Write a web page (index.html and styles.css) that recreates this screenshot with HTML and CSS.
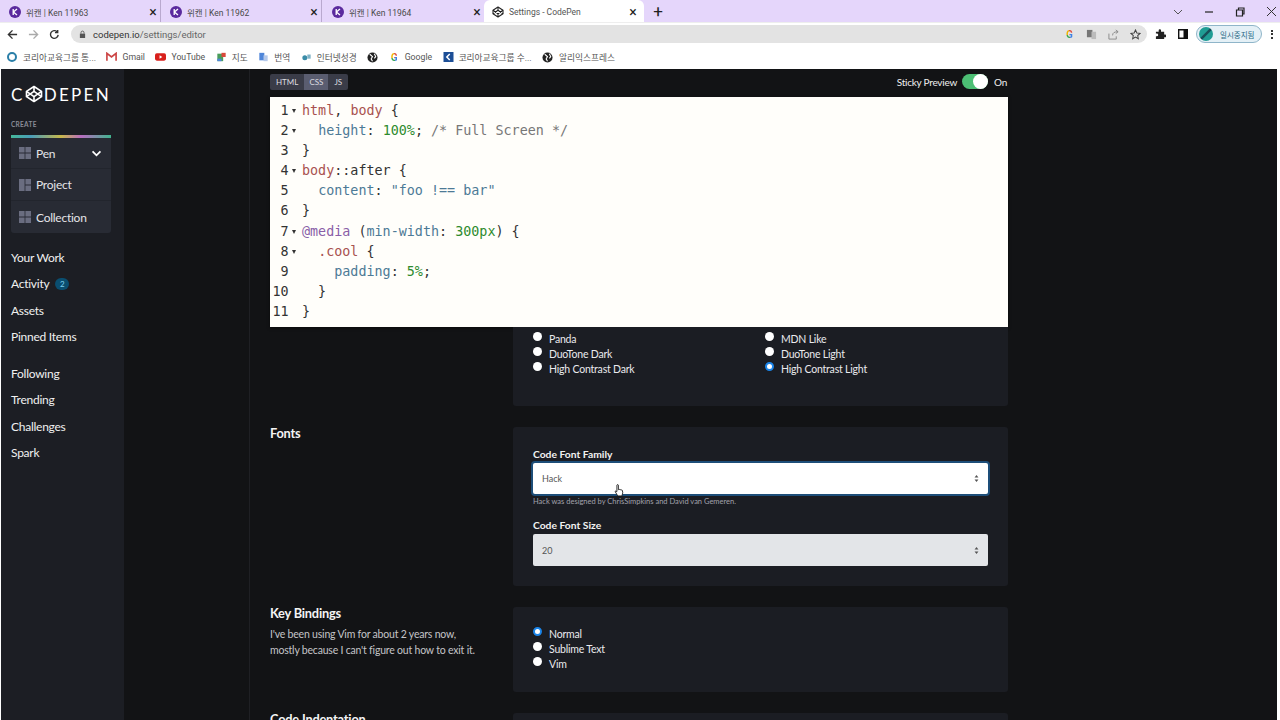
FILE: index.html
```html
<!DOCTYPE html>
<html lang="ko">
<head>
<meta charset="utf-8">
<title>Settings - CodePen</title>
<link rel="stylesheet" href="styles.css">
</head>
<body>
<svg class="defs" width="0" height="0" aria-hidden="true">
  <defs>
    <symbol id="k" viewBox="0 0 12 12"><circle cx="6" cy="6" r="6" fill="#5b2a9e"/><path d="M4.200 3v6M8 3 4.400 6 8 9" fill="none" stroke="#fff" stroke-width="1.300"/></symbol>
    <symbol id="cube" viewBox="0 0 24 24"><g fill="none" stroke="currentColor" stroke-width="2.200" stroke-linejoin="round"><path d="M12 2 22 8.500v7L12 22 2 15.500v-7Z"/><path d="M12 2v6.500M12 15.500V22M2 8.500l10 7 10-7M2 15.500l10-7 10 7"/></g></symbol>
    <symbol id="globe" viewBox="0 0 12 12"><circle cx="6" cy="6" r="5.500" fill="#222"/><path d="M3 2.500 6 5 4.500 7.500 6 10M8 2 9.500 5 8 7" fill="none" stroke="#fff" stroke-width="1.200"/></symbol>
    <symbol id="grid4" viewBox="0 0 14 14"><path d="M0 0h6.500v6.500H0zM7.500 0H14v6.500H7.500zM0 7.500h6.500V14H0zM7.500 7.500H14V14H7.500z" fill="#6a6d80"/></symbol>
    <symbol id="gridp" viewBox="0 0 14 14"><path d="M0 0h6.500v14H0zM7.500 0H14v6.500H7.500zM7.500 7.500H14V14H7.500z" fill="#6a6d80"/></symbol>
    <symbol id="updown" viewBox="0 0 6 9"><path d="M3 0 5.500 3.300H.5ZM3 9 .5 5.700h5Z" fill="#555"/></symbol>
  </defs>
</svg>

<div class="chrome">
  <div class="tabs">
    <div class="tab"><svg class="fav"><use href="#k"/></svg><span class="tab-t">위캔 | Ken 11963</span><span class="x">×</span></div>
    <div class="tab"><svg class="fav"><use href="#k"/></svg><span class="tab-t">위캔 | Ken 11962</span><span class="x">×</span></div>
    <div class="tab"><svg class="fav"><use href="#k"/></svg><span class="tab-t">위캔 | Ken 11964</span><span class="x">×</span></div>
    <div class="tab tab-on"><svg class="fav cp-fav"><use href="#cube"/></svg><span class="tab-t">Settings - CodePen</span><span class="x">×</span></div>
    <span class="plus">+</span>
    <div class="win">
      <svg width="10" height="6" viewBox="0 0 10 6"><path d="M1 1l4 4 4-4" fill="none" stroke="#555" stroke-width="1"/></svg>
      <svg width="10" height="2" viewBox="0 0 10 2"><path d="M1 1h8" stroke="#222" stroke-width="1.200"/></svg>
      <svg width="10" height="10" viewBox="0 0 10 10"><path d="M1.500 3h6v6h-6zM3.500 3V1h5.500v6H7.500" fill="none" stroke="#222" stroke-width="1.200"/></svg>
      <svg width="11" height="11" viewBox="0 0 11 11"><path d="M1 1l9 9M10 1l-9 9" stroke="#333" stroke-width="1"/></svg>
    </div>
  </div>
  <div class="toolbar">
    <svg class="nav" viewBox="0 0 12 12"><path d="M11 6H2M6 1.500 1.500 6 6 10.500" fill="none" stroke="#333" stroke-width="1.500"/></svg>
    <svg class="nav" viewBox="0 0 12 12"><path d="M1 6h9M6 1.500 10.500 6 6 10.500" fill="none" stroke="#aaa" stroke-width="1.500"/></svg>
    <svg class="nav" viewBox="0 0 12 12"><path d="M10 6.500A4.200 4.200 0 1 1 8.800 3M9.500 1v3h-3" fill="none" stroke="#333" stroke-width="1.500"/></svg>
    <div class="omni">
      <svg class="lock" viewBox="0 0 8 10"><path d="M1 4h6v5H1z" fill="#555"/><path d="M2.300 4V2.800a1.700 1.700 0 0 1 3.400 0V4" fill="none" stroke="#555"/></svg>
      <span class="url">codepen.io<span class="url-dim">/settings/editor</span></span>
      <span class="omni-end">
        <span class="g">G</span>
        <svg class="oi" viewBox="0 0 12 12"><path d="M1 1h6v8H1z" fill="#777"/><path d="M6 3h5v8H6z" fill="#bbb"/></svg>
        <svg class="oi" viewBox="0 0 12 12"><path d="M1 5v6h8V8M5 7c0-3 2-4 6-4M8.500 1 11 3 8.500 5" fill="none" stroke="#888"/></svg>
        <svg class="oi" viewBox="0 0 12 12"><path d="M6 1l1.500 3.300 3.500.4-2.600 2.400.7 3.500L6 8.800l-3.100 1.800.7-3.500L1 4.700l3.500-.4Z" fill="none" stroke="#444" stroke-width="1.100"/></svg>
      </span>
    </div>
    <svg class="puzzle" viewBox="0 0 12 12"><path d="M1 3h3V1.500a1.300 1.300 0 0 1 2.600 0V3H10v3h1a1.500 1.500 0 0 1 0 3h-1v2H1V8h1a1.500 1.500 0 0 0 0-3H1Z" fill="#222"/></svg>
    <svg class="panel" viewBox="0 0 10 10"><path d="M.7.700h8.600v8.600H.7z" fill="#fff" stroke="#111" stroke-width="1.400"/><path d="M5.500 1h4v8h-4z" fill="#111"/></svg>
    <div class="profile"><span class="avatar"></span><span class="p-t">일시중지됨</span></div>
    <span class="dots"><i></i><i></i><i></i></span>
  </div>
  <div class="bookmarks">
    <span class="bm"><span class="ring"></span>코리아교육그룹 통...</span>
    <span class="bm"><svg class="bi" viewBox="0 0 12 10"><path d="M1 9V1l5 4 5-4v8" fill="none" stroke="#c44" stroke-width="1.800"/></svg>Gmail</span>
    <span class="bm"><svg class="bi" viewBox="0 0 12 10"><rect y="1" width="12" height="8" rx="2" fill="#d8201c"/><path d="M5 3.200 8 5 5 6.800Z" fill="#fff"/></svg>YouTube</span>
    <span class="bm"><svg class="bi" viewBox="0 0 12 12"><path d="M1 2h7v9H1z" fill="#4a9d5b"/><path d="M6 1h5v5H6z" fill="#d9483b"/><path d="M1 8h5v3H1z" fill="#4f86d9"/></svg>지도</span>
    <span class="bm"><svg class="bi" viewBox="0 0 12 12"><path d="M1 1h6v9H1z" fill="#4f86d9"/><path d="M6 4h5v7H6z" fill="#b5c9ea"/></svg>번역</span>
    <span class="bm"><svg class="bi" viewBox="0 0 12 12"><circle cx="4" cy="7" r="3" fill="#3a8ca8"/><path d="M7 3h4v5H7z" fill="#7fb2c6"/></svg>인터넷성경</span>
    <svg class="gl"><use href="#globe"/></svg>
    <span class="bm"><span class="g gb">G</span>Google</span>
    <span class="bm"><svg class="bi" viewBox="0 0 12 12"><rect width="12" height="12" fill="#1c4e96"/><path d="M7.500 2.500 4 6l3.500 3.500" fill="none" stroke="#fff" stroke-width="1.800"/></svg>코리아교육그룹 수...</span>
    <span class="bm"><svg class="gl"><use href="#globe"/></svg>알리익스프레스</span>
  </div>
</div>

<div class="page">
  <aside class="side">
    <div class="logo">C<svg class="logo-mark"><use href="#cube"/></svg>DEPEN</div>
    <div class="create">CREATE</div>
    <div class="rainbow"></div>
    <div class="create-box">
      <div class="cb-row"><svg class="cb-ic"><use href="#grid4"/></svg>Pen<svg class="chev" viewBox="0 0 12 8"><path d="M1.500 1.500 6 6l4.500-4.500" fill="none" stroke="#fff" stroke-width="2"/></svg></div>
      <div class="cb-row"><svg class="cb-ic"><use href="#gridp"/></svg>Project</div>
      <div class="cb-row"><svg class="cb-ic"><use href="#grid4"/></svg>Collection</div>
    </div>
    <nav class="nav-a">
      <a>Your Work</a>
      <a>Activity <span class="badge">2</span></a>
      <a>Assets</a>
      <a>Pinned Items</a>
    </nav>
    <nav class="nav-b">
      <a>Following</a>
      <a>Trending</a>
      <a>Challenges</a>
      <a>Spark</a>
    </nav>
  </aside>

  <div class="gutter"></div>

  <main class="main">
    <div class="sticky-head">
      <div class="seg"><span>HTML</span><span class="seg-on">CSS</span><span>JS</span></div>
      <div class="sticky-opt">Sticky Preview <span class="toggle"><i></i></span> <span class="on">On</span></div>
    </div>
    <div class="editor">
<div class="ln"><span class="no">1</span><span class="fold fold-o"></span><span class="code"><span class="t">html</span>, <span class="t">body</span> {</span></div>
<div class="ln"><span class="no">2</span><span class="fold fold-o"></span><span class="code">  <span class="p">height</span>: <span class="n">100%</span>; <span class="c">/* Full Screen */</span></span></div>
<div class="ln"><span class="no">3</span><span class="fold"></span><span class="code">}</span></div>
<div class="ln"><span class="no">4</span><span class="fold fold-o"></span><span class="code"><span class="t">body</span>::after {</span></div>
<div class="ln"><span class="no">5</span><span class="fold"></span><span class="code">  <span class="p">content</span>: <span class="p">"foo !== bar"</span></span></div>
<div class="ln"><span class="no">6</span><span class="fold"></span><span class="code">}</span></div>
<div class="ln"><span class="no">7</span><span class="fold fold-o"></span><span class="code"><span class="m">@media</span> (<span class="p">min-width</span>: <span class="n">300px</span>) {</span></div>
<div class="ln"><span class="no">8</span><span class="fold fold-o"></span><span class="code">  <span class="t">.cool</span> {</span></div>
<div class="ln"><span class="no">9</span><span class="fold"></span><span class="code">    <span class="p">padding</span>: <span class="n">5%</span>;</span></div>
<div class="ln"><span class="no">10</span><span class="fold"></span><span class="code">  }</span></div>
<div class="ln"><span class="no">11</span><span class="fold"></span><span class="code">}</span></div>
    </div>

    <section class="row row-theme">
      <div class="row-l"></div>
      <div class="card card-theme">
        <div class="radio-col">
          <label class="radio"><i class="dot"></i>Panda</label>
          <label class="radio"><i class="dot"></i>DuoTone Dark</label>
          <label class="radio"><i class="dot"></i>High Contrast Dark</label>
        </div>
        <div class="radio-col">
          <label class="radio"><i class="dot"></i>MDN Like</label>
          <label class="radio"><i class="dot"></i>DuoTone Light</label>
          <label class="radio"><i class="dot dot-on"></i>High Contrast Light</label>
        </div>
      </div>
    </section>

    <section class="row">
      <div class="row-l"><h2>Fonts</h2></div>
      <div class="card card-fonts">
        <div class="f-label">Code Font Family</div>
        <div class="select select-focus"><span>Hack</span><svg class="arrows"><use href="#updown"/></svg>
          <svg class="hand" viewBox="0 0 12 16"><path d="M3.500 1.500a1 1 0 0 1 1.800 0V7l1-.3 1.200.3 1.200.2 1.300.6.500 3-1 3.700H4.500L1.500 9.500l.3-1 1.700.8Z" fill="#fff" stroke="#111" stroke-width="1"/></svg>
        </div>
        <div class="hint">Hack was designed by ChrisSimpkins and David van Gemeren.</div>
        <div class="f-label f-label-2">Code Font Size</div>
        <div class="select select-gray"><span>20</span><svg class="arrows"><use href="#updown"/></svg></div>
      </div>
    </section>

    <section class="row">
      <div class="row-l">
        <h2>Key Bindings</h2>
        <p>I've been using Vim for about 2 years now, mostly because I can't figure out how to exit it.</p>
      </div>
      <div class="card card-keys">
        <label class="radio"><i class="dot dot-on"></i>Normal</label>
        <label class="radio"><i class="dot"></i>Sublime Text</label>
        <label class="radio"><i class="dot"></i>Vim</label>
      </div>
    </section>

    <section class="row">
      <div class="row-l"><h2>Code Indentation</h2></div>
      <div class="card card-last"></div>
    </section>
  </main>
</div>
</body>
</html>
```
FILE: styles.css
```css
* { box-sizing: border-box; }
html, body { margin: 0; height: 100%; overflow: hidden; }
body { width: 1280px; height: 720px; background: #fff; font-family: "Lato", "Noto Sans CJK KR", sans-serif; display: flex; flex-direction: column; }
.defs { position: absolute; }

/* browser chrome */
.chrome { height: 69px; flex: none; display: flex; flex-direction: column; background: #fff; font-family: "Roboto", "Noto Sans CJK KR", sans-serif; color: #555; }
.tabs { height: 23px; background: #e5d6fb; display: flex; align-items: center; }
.tab { width: 161px; height: 23px; padding: 0 1px 0 9px; display: flex; align-items: center; font-size: 8.500px; color: #4a4a4a; border-right: 1px solid #b9a9cf; flex: none; }
.tab:nth-child(3) { width: 162px; border-right: 0; padding-left: 10px; }
.tab-on { width: 160px; background: #fff; border: 0; border-radius: 6px 6px 0 0; padding: 0 5px 0 8px; color: #555; }
.fav { width: 12px; height: 12px; margin-right: 5px; flex: none; }
.cp-fav { color: #222; }
.tab-t { flex: 1; white-space: nowrap; }
.x { font-size: 14px; color: #222; width: 12px; text-align: center; }
.plus { font-size: 17px; margin-left: 8px; color: #222; width: 12px; text-align: center; line-height: 1; }
.win { margin-left: auto; display: flex; align-items: center; gap: 21px; padding-right: 3px; }
.toolbar { height: 22px; padding: 0 3px 0 7px; display: flex; align-items: center; gap: 10px; box-shadow: 0 -1px 0 #eee; }
.nav { width: 11px; height: 11px; flex: none; }
.omni { flex: none; width: 1076px; margin-left: 1px; height: 18px; border-radius: 9px; background: #e3e3e3; display: flex; align-items: center; padding: 0 6px 0 8px; font-size: 9.500px; }
.lock { width: 7px; height: 9px; margin-right: 7px; }
.url { color: #333; white-space: nowrap; }
.url-dim { color: #666; }
.omni-end { margin-left: auto; display: flex; align-items: center; gap: 11px; }
.oi { width: 11px; height: 11px; }
.g { font-weight: 700; font-size: 10px; width: 11px; text-align: center; background: conic-gradient(#e0483b 0 25%, #3e82e4 25% 50%, #3aa757 50% 75%, #f0b400 75%); -webkit-background-clip: text; background-clip: text; color: transparent; }
.puzzle { width: 11px; height: 11px; margin-left: -2px; flex: none; }
.panel { width: 10px; height: 10px; flex: none; margin-left: 2px; }
.profile { width: 66px; height: 18px; border: 1px solid #8fb5c9; border-radius: 9px; background: #e4f0f6; display: flex; align-items: center; padding-left: 2px; margin-left: -2px; flex: none; }
.avatar { width: 14px; height: 14px; border-radius: 50%; background: linear-gradient(135deg, #1f9d94 42%, #17505a 45% 55%, #1f9d94 58%); margin-right: 7px; flex: none; }
.p-t { font-size: 7.500px; color: #2a6a86; white-space: nowrap; }
.dots { display: flex; flex-direction: column; gap: 1.500px; margin-left: -1px; }
.dots i { width: 2px; height: 2px; background: #333; display: block; }
.bookmarks { height: 24px; padding: 0 0 0 7px; display: flex; align-items: center; gap: 10.500px; font-size: 8.700px; color: #555; }
.bm { display: inline-flex; align-items: center; white-space: nowrap; }
.ring { width: 10px; height: 10px; border-radius: 50%; border: 2.500px solid #2b7fa8; margin-right: 6px; }
.bi { width: 11px; height: 10px; margin-right: 5px; flex: none; }
.gl { width: 11px; height: 11px; flex: none; }
.bm .gl { margin-right: 6px; }
.gb { margin-right: 5px; }

/* page */
.page { height: 651px; flex: none; display: flex; background: #121315; overflow: hidden; margin-right: 3px; margin-left: 1px; }
.side { width: 123px; flex: none; background: #1c1e24; padding: 12px 13px 0 10px; color: #f2f2f2; }
.logo { display: flex; align-items: center; height: 26px; font-size: 17px; letter-spacing: 2.300px; color: #fff; }
.logo-mark { width: 18px; height: 18px; margin: 0 1px 0 0; color: #fff; }
.create { font-size: 6.500px; font-weight: 700; color: #8a8c98; letter-spacing: .3px; margin-top: 14px; line-height: 8px; }
.rainbow { height: 3px; margin-top: 6px; background: linear-gradient(90deg, #45b89a, #4a9db8 20%, #c8b84a 50%, #b86cc0 70%, #3fb58e); }
.create-box { background: #282b34; border-radius: 0 0 3px 3px; }
.cb-row { height: 32px; display: flex; align-items: center; padding: 0 9px 0 8px; font-size: 12px; letter-spacing: -.25px; color: #e4e4e8; border-bottom: 1px solid #22252d; }
.cb-row:first-child { height: 31px; }
.cb-row:last-child { border: 0; }
.cb-ic { width: 12px; height: 12px; margin-right: 5px; flex: none; }
.chev { width: 11px; height: 7px; margin-left: auto; }
.nav-a, .nav-b { display: flex; flex-direction: column; font-size: 12px; letter-spacing: -.25px; }
.nav-a { margin-top: 11px; }
.nav-b { margin-top: 10px; }
.nav-a a, .nav-b a { height: 26.500px; display: flex; align-items: center; color: #f0f0f0; white-space: pre; }
.badge { background: #0a4e70; color: #7fd0ee; font-size: 8px; border-radius: 6px; padding: 1px 5px; margin-left: 3px; line-height: 10px; }
.gutter { width: 126px; flex: none; border-right: 1px solid #1f2024; }
.main { width: 760px; flex: none; padding-left: 20px; color: #e8e8ec; }

.sticky-head { width: 738px; height: 28px; display: flex; align-items: center; justify-content: space-between; padding: 0 1px 3px 0; }
.seg { display: flex; font-size: 8px; color: #dcdce0; background: #3a3c48; border-radius: 2px; }
.seg span { height: 16px; padding: 0 6px; display: flex; align-items: center; }
.seg .seg-on { background: #5a5d70; padding: 0 5px; }
.sticky-opt { display: flex; align-items: center; font-size: 10px; letter-spacing: -.25px; color: #f0f0f0; }
.toggle { width: 26px; height: 15px; border-radius: 8px; background: #4cbf74; margin: 0 6px 0 5px; display: flex; justify-content: flex-end; }
.toggle i { width: 15px; height: 15px; border-radius: 50%; background: #fff; display: block; }
.on { font-size: 10px; }

.editor { width: 738px; height: 230px; background: #fffefa; padding-top: 4px; font-family: "DejaVu Sans Mono", monospace; font-size: 13.400px; line-height: 20.100px; color: #333; box-shadow: 0 1px 3px rgba(0,0,0,.5); }
.ln { display: flex; height: 20.100px; white-space: pre; }
.no { width: 18.500px; text-align: right; color: #333; flex: none; }
.fold { width: 13.500px; flex: none; display: flex; align-items: center; justify-content: center; }
.fold-o::before { content: ""; border-left: 2.500px solid transparent; border-right: 2.500px solid transparent; border-top: 4px solid #333; margin-right: 2px; }
.code { white-space: pre; }
.t { color: #a8514f; }
.p { color: #4d7a96; }
.n { color: #2e8b2e; }
.c { color: #777; }
.m { color: #8a5fa8; }

.row { width: 738px; display: grid; grid-template-columns: 243px 495px; margin-bottom: 21px; }
.row-l h2 { margin: 0; font-size: 12.800px; letter-spacing: -.2px; font-weight: 700; color: #f4f4f4; line-height: 12px; }
.row-l p { margin: 7px 0 0; font-size: 10.500px; line-height: 16px; color: #c4c4c8; width: 206px; letter-spacing: -.2px; }
.card { background: #1b1d23; border-radius: 3px; }
.card-theme { height: 79px; border-radius: 0 0 3px 3px; padding: 4px 20px 0; display: grid; grid-template-columns: 232px 1fr; }
.radio-col { display: flex; flex-direction: column; }
.radio { display: flex; align-items: center; height: 15.200px; font-size: 10.500px; letter-spacing: -.2px; color: #eaeaee; white-space: nowrap; }
.dot { width: 9px; height: 9px; border-radius: 50%; background: #fff; margin-right: 7px; position: relative; top: -2px; flex: none; }
.dot-on { border: 2px solid #1a84e8; }

.card-fonts { height: 159px; padding: 21px 20px 0; }
.f-label { font-size: 10.300px; font-weight: 700; line-height: 13px; color: #f2f2f2; }
.f-label-2 { margin-top: 13px; }
.select { height: 31px; margin-top: 2px; display: flex; align-items: center; justify-content: space-between; padding: 0 9px; font-size: 9px; color: #555; position: relative; border-radius: 2px; }
.select-focus { background: #fff; box-shadow: 0 0 0 2px #1d4e79; }
.select-gray { height: 32px; background: #e3e5e8; }
.arrows { width: 5px; height: 7px; flex: none; }
.hand { position: absolute; left: 81px; top: 20px; width: 10px; height: 15px; }
.hint { font-size: 7.500px; color: #a2a2ac; margin-top: 3px; line-height: 9px; }
.card-keys { height: 85px; padding: 19px 20px 0; }
.card-last { height: 20px; }
```
